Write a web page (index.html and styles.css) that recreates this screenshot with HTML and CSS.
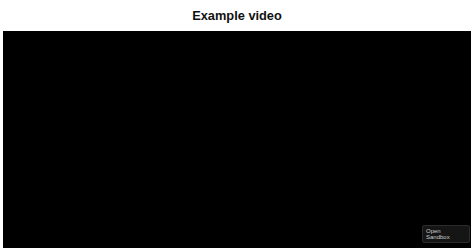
FILE: index.html
```html
<!DOCTYPE html>
<html>
<head>
<meta charset="utf-8">
<link rel="stylesheet" href="styles.css">
</head>
<body>
<div class="page">
  <h1 class="title">Example video</h1>
  <div class="video"></div>
</div>
<a class="open-sandbox" href="#">Open Sandbox</a>
</body>
</html>
```
FILE: styles.css
```css
html, body {
  margin: 0;
  padding: 0;
  background: #ffffff;
  overflow: hidden;
}
.page {
  padding: 0 3px;
  font-family: "Liberation Sans", Arial, sans-serif;
}
.title {
  margin: 0;
  padding-top: 8px;
  height: 23px;
  font-size: 12.8px;
  line-height: 16px;
  font-weight: bold;
  text-align: center;
  color: #111111;
}
.video {
  width: 468px;
  height: 217px;
  background: #000000;
}
.open-sandbox {
  position: fixed;
  right: 4px;
  bottom: 5px;
  width: 38px;
  padding: 2px 5px 2px 3px;
  background: #151515;
  border: 1px solid #2c2c2c;
  border-radius: 2px;
  color: #cccccc;
  font-family: "Liberation Sans", Arial, sans-serif;
  font-size: 6px;
  line-height: 6px;
  text-decoration: none;
}
```
